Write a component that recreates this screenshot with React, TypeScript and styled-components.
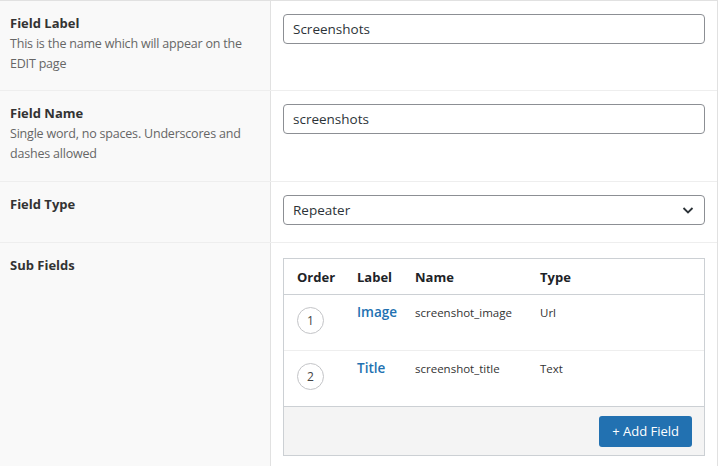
import React from "react";
import styled, { createGlobalStyle } from "styled-components";

const Global = createGlobalStyle`
  body { margin: 0; background: #fff; font-family: "Open Sans", "Noto Sans", sans-serif; color: #1d2327; }
`;

const Sheet = styled.div`
  width: 718px;
  border: 1px solid #e1e1e1;
  border-left: none;
  box-sizing: border-box;
`;

const Row = styled.div<{ $h: number }>`
  display: grid;
  grid-template-columns: 271px 1fr;
  min-height: ${(p) => p.$h}px;
  border-top: 1px solid #eeeeee;
  &:first-child { border-top: none; }
`;

const LabelCell = styled.div`
  background: #f9f9f9;
  border-right: 1px solid #e1e1e1;
  padding: 13px 10px 0 10px;
`;

const Title = styled.div`
  font-size: 13px;
  font-weight: 700;
  color: #333;
  line-height: 18px;
`;

const Desc = styled.div`
  font-size: 12.5px;
  color: #666;
  line-height: 20px;
  margin-top: 2px;
  letter-spacing: -0.2px;
`;

const InputCell = styled.div`
  padding: 13px 12px 12px 12px;
`;

const TextInput = styled.div`
  height: 30px;
  box-sizing: border-box;
  border: 1px solid #8c8f94;
  border-radius: 4px;
  padding: 0 9px;
  display: flex;
  align-items: center;
  justify-content: space-between;
  font-size: 13.5px;
  color: #2c3338;
`;

const Table = styled.div`
  margin-top: 2px;
  border: 1px solid #ccd0d4;
`;

const Grid = styled.div<{ $head?: boolean }>`
  display: grid;
  grid-template-columns: 60px 58px 125px 1fr;
  padding-left: 13px;
  height: ${(p) => (p.$head ? 35 : 55)}px;
  align-items: ${(p) => (p.$head ? "center" : "start")};
  border-bottom: 1px solid ${(p) => (p.$head ? "#ccd0d4" : "#eeeeee")};
  &:nth-child(3) { border-bottom: 1px solid #ccd0d4; }
`;

const Head = styled.div`
  font-size: 13px;
  font-weight: 700;
  color: #1d2327;
`;

const Circle = styled.div`
  width: 27px;
  height: 27px;
  border: 1px solid #c3c4c7;
  border-radius: 50%;
  box-sizing: border-box;
  display: flex;
  align-items: center;
  justify-content: center;
  font-size: 12px;
  color: #444;
  margin-top: 12px;
`;

const SubLabel = styled.div`
  font-size: 13.5px;
  font-weight: 600;
  color: #2271b1;
  margin-top: 8px;
`;

const Cell = styled.div`
  font-size: 11.5px;
  color: #333;
  margin-top: 10px;
`;

const Footer = styled.div`
  background: #f4f4f4;
  height: 48px;
  display: flex;
  justify-content: flex-end;
  align-items: center;
  padding-right: 12px;
`;

const Button = styled.button`
  background: #2271b1;
  color: #fff;
  border: none;
  border-radius: 3px;
  height: 31px;
  padding: 0 13px;
  font-family: inherit;
  font-size: 13px;
`;

const subs = [
  { n: 1, label: "Image", name: "screenshot_image", type: "Url" },
  { n: 2, label: "Title", name: "screenshot_title", type: "Text" },
];

export default function App() {
  return (
    <>
      <Global />
      <Sheet>
        <Row $h={89}>
          <LabelCell>
            <Title>Field Label</Title>
            <Desc>This is the name which will appear on the EDIT page</Desc>
          </LabelCell>
          <InputCell><TextInput>Screenshots</TextInput></InputCell>
        </Row>
        <Row $h={90}>
          <LabelCell>
            <Title>Field Name</Title>
            <Desc>Single word, no spaces. Underscores and dashes allowed</Desc>
          </LabelCell>
          <InputCell><TextInput>screenshots</TextInput></InputCell>
        </Row>
        <Row $h={60}>
          <LabelCell><Title>Field Type</Title></LabelCell>
          <InputCell>
            <TextInput>
              Repeater
              <svg width="14" height="14" viewBox="0 0 14 14">
                <path d="M2.5 5l4.5 4.5L11.5 5" fill="none" stroke="#2c3338" strokeWidth="1.8" />
              </svg>
            </TextInput>
          </InputCell>
        </Row>
        <Row $h={223}>
          <LabelCell><Title>Sub Fields</Title></LabelCell>
          <InputCell>
            <Table>
              <Grid $head>
                <Head>Order</Head><Head>Label</Head><Head>Name</Head><Head>Type</Head>
              </Grid>
              {subs.map((s) => (
                <Grid key={s.n}>
                  <Circle>{s.n}</Circle>
                  <SubLabel>{s.label}</SubLabel>
                  <Cell>{s.name}</Cell>
                  <Cell>{s.type}</Cell>
                </Grid>
              ))}
              <Footer><Button>+ Add Field</Button></Footer>
            </Table>
          </InputCell>
        </Row>
      </Sheet>
    </>
  );
}
